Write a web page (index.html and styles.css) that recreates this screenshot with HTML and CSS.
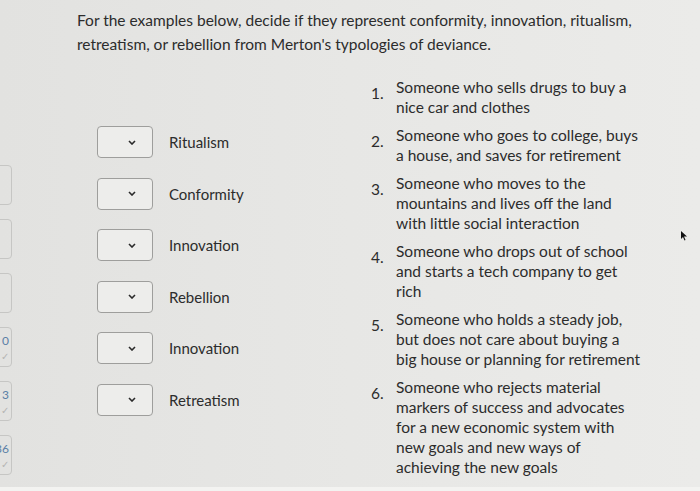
FILE: index.html
```html
<!DOCTYPE html>
<html lang="en">
<head>
<meta charset="utf-8">
<title>Merton's typologies</title>
<link rel="stylesheet" href="styles.css">
</head>
<body>
<div class="screen">
  <aside class="rail">
    <div class="rail-box"></div>
    <div class="rail-box"></div>
    <div class="rail-box"></div>
    <div class="rail-box"><span class="rail-num">0</span><span class="rail-check">&#10003;</span></div>
    <div class="rail-box"><span class="rail-num">3</span><span class="rail-check">&#10003;</span></div>
    <div class="rail-box"><span class="rail-num">36</span><span class="rail-check">&#10003;</span></div>
  </aside>
  <main class="main">
    <p class="prompt">For the examples below, decide if they represent conformity, innovation, ritualism,<br>retreatism, or rebellion from Merton's typologies of deviance.</p>
    <div class="matching">
      <div class="answers">
        <div class="answer"><div class="select"><svg class="chev" viewBox="0 0 8 5" width="8" height="5"><path d="M1 1l3 3 3-3" fill="none" stroke="#2a2a2a" stroke-width="1.6"/></svg></div><span class="label">Ritualism</span></div>
        <div class="answer"><div class="select"><svg class="chev" viewBox="0 0 8 5" width="8" height="5"><path d="M1 1l3 3 3-3" fill="none" stroke="#2a2a2a" stroke-width="1.6"/></svg></div><span class="label">Conformity</span></div>
        <div class="answer"><div class="select"><svg class="chev" viewBox="0 0 8 5" width="8" height="5"><path d="M1 1l3 3 3-3" fill="none" stroke="#2a2a2a" stroke-width="1.6"/></svg></div><span class="label">Innovation</span></div>
        <div class="answer"><div class="select"><svg class="chev" viewBox="0 0 8 5" width="8" height="5"><path d="M1 1l3 3 3-3" fill="none" stroke="#2a2a2a" stroke-width="1.6"/></svg></div><span class="label">Rebellion</span></div>
        <div class="answer"><div class="select"><svg class="chev" viewBox="0 0 8 5" width="8" height="5"><path d="M1 1l3 3 3-3" fill="none" stroke="#2a2a2a" stroke-width="1.6"/></svg></div><span class="label">Innovation</span></div>
        <div class="answer"><div class="select"><svg class="chev" viewBox="0 0 8 5" width="8" height="5"><path d="M1 1l3 3 3-3" fill="none" stroke="#2a2a2a" stroke-width="1.6"/></svg></div><span class="label">Retreatism</span></div>
      </div>
      <ol class="prompts">
        <li class="item"><span class="num">1.</span><span class="text">Someone who sells drugs to buy a<br>nice car and clothes</span></li>
        <li class="item"><span class="num">2.</span><span class="text">Someone who goes to college, buys<br>a house, and saves for retirement</span></li>
        <li class="item"><span class="num">3.</span><span class="text">Someone who moves to the<br>mountains and lives off the land<br>with little social interaction</span></li>
        <li class="item"><span class="num">4.</span><span class="text">Someone who drops out of school<br>and starts a tech company to get<br>rich</span></li>
        <li class="item"><span class="num">5.</span><span class="text">Someone who holds a steady job,<br>but does not care about buying a<br>big house or planning for retirement</span></li>
        <li class="item"><span class="num">6.</span><span class="text">Someone who rejects material<br>markers of success and advocates<br>for a new economic system with<br>new goals and new ways of<br>achieving the new goals</span></li>
      </ol>
    </div>
  </main>
</div>
<div class="bottom-edge"></div>
<svg class="cursor" viewBox="0 0 6 10" width="6" height="10"><path d="M0 0L0 8L2 6L3.5 9.5L4.5 9L3 5.6L6 5.6Z" fill="#111"/></svg>
</body>
</html>
```

FILE: styles.css
```css
html, body {
  margin: 0;
  padding: 0;
}
body {
  width: 700px;
  height: 491px;
  overflow: hidden;
  position: relative;
  background: linear-gradient(90deg, #e2e2e0 0%, #e7e7e5 50%, #ebebe9 100%);
  font-family: Lato, "Open Sans", sans-serif;
  color: #2c2c2c;
}
.screen {
  display: flex;
  height: 487px;
}
.rail {
  width: 13px;
  flex: none;
  overflow: hidden;
  padding-top: 165px;
  box-sizing: border-box;
  display: flex;
  flex-direction: column;
  gap: 14px;
}
.rail-box {
  width: 40px;
  height: 40px;
  margin-left: -28px;
  flex: none;
  box-sizing: border-box;
  border: 1px solid #c6c6c4;
  border-radius: 4px;
  display: flex;
  flex-direction: column;
  align-items: flex-end;
  padding: 6px 2px 0 0;
}
.rail-num {
  font-size: 12px;
  line-height: 14px;
  color: #5a7fa6;
}
.rail-check {
  font-size: 10px;
  line-height: 12px;
  color: #b5b5b3;
  margin-top: 2px;
}
.main {
  flex: 1;
  padding: 8px 0 0 64px;
}
.prompt {
  margin: 0;
  font-size: 15.5px;
  line-height: 24px;
  white-space: nowrap;
}
.matching {
  display: flex;
  margin-top: 21px;
}
.answers {
  width: 294px;
  flex: none;
  box-sizing: border-box;
  padding: 49px 0 0 20px;
  display: flex;
  flex-direction: column;
  gap: 19.5px;
}
.answer {
  display: flex;
  align-items: center;
  height: 32px;
}
.select {
  width: 56px;
  height: 32px;
  box-sizing: border-box;
  border: 1.5px solid #9e9e9c;
  border-radius: 4px;
  background: #ededeb;
  display: flex;
  align-items: center;
  justify-content: flex-end;
  padding-right: 16px;
}
.chev {
  display: block;
}
.label {
  margin-left: 16px;
  font-size: 15px;
}
.prompts {
  list-style: none;
  margin: 0;
  padding: 0;
  display: flex;
  flex-direction: column;
  gap: 8px;
}
.item {
  display: flex;
}
.num {
  width: 25px;
  flex: none;
  padding-top: 6px;
  font-size: 15.5px;
  line-height: 20px;
}
.text {
  font-size: 15.5px;
  line-height: 20px;
  white-space: nowrap;
}
.bottom-edge {
  height: 4px;
  background: #f3f3f1;
}
.cursor {
  position: absolute;
  left: 681px;
  top: 231px;
}
```
